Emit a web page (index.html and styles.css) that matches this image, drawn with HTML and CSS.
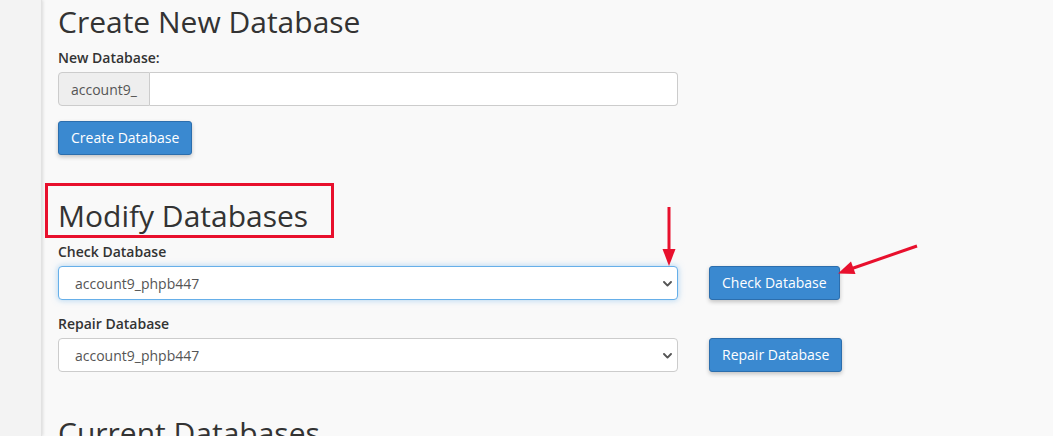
FILE: index.html
```html
<!DOCTYPE html>
<html lang="en">
<head>
<meta charset="utf-8">
<title>MySQL Databases</title>
<link rel="stylesheet" href="styles.css">
</head>
<body>
<div class="layout">
  <aside class="sidebar"></aside>
  <main class="content">
    <section class="section">
      <h1 class="title">Create New Database</h1>
      <label class="label">New Database:</label>
      <div class="input-group">
        <span class="addon">account9_</span>
        <span class="input"></span>
      </div>
      <button class="btn btn-create">Create Database</button>
    </section>

    <section class="section section-modify">
      <h1 class="title">Modify Databases</h1>
      <label class="label">Check Database</label>
      <div class="row">
        <div class="select focused">
          <span class="select-text">account9_phpb447</span>
          <svg class="chevron" width="9" height="6" viewBox="0 0 9 6"><path d="M1 1 L4.5 4.6 L8 1" fill="none" stroke="#555" stroke-width="1.9" stroke-linecap="round" stroke-linejoin="round"/></svg>
        </div>
        <button class="btn">Check Database</button>
      </div>
      <label class="label label-repair">Repair Database</label>
      <div class="row">
        <div class="select">
          <span class="select-text">account9_phpb447</span>
          <svg class="chevron" width="9" height="6" viewBox="0 0 9 6"><path d="M1 1 L4.5 4.6 L8 1" fill="none" stroke="#555" stroke-width="1.9" stroke-linecap="round" stroke-linejoin="round"/></svg>
        </div>
        <button class="btn">Repair Database</button>
      </div>
    </section>

    <section class="section section-current">
      <h1 class="title">Current Databases</h1>
    </section>
  </main>
</div>

<svg class="annotations" width="1053" height="436" viewBox="0 0 1053 436">
  <rect x="46.5" y="184.5" width="286" height="52" fill="none" stroke="#e8102d" stroke-width="3"/>
  <line x1="669" y1="207" x2="669" y2="252" stroke="#e8102d" stroke-width="3"/>
  <polygon points="662.5,249 675.5,249 669,266" fill="#e8102d"/>
  <line x1="917" y1="246" x2="852" y2="268.5" stroke="#e8102d" stroke-width="3"/>
  <polygon points="838,273.5 851,261.5 855.5,274" fill="#e8102d"/>
</svg>
</body>
</html>
```

FILE: styles.css
```css
* { box-sizing: border-box; }

html, body {
  margin: 0;
  padding: 0;
  height: 100%;
}

body {
  font-family: "Open Sans", "Liberation Sans", sans-serif;
  color: #333;
  background: #f9f9f9;
  overflow: hidden;
  position: relative;
}

.layout {
  display: flex;
  height: 436px;
}

.sidebar {
  width: 42px;
  flex: 0 0 42px;
  background: #f3f3f3;
  box-shadow: 1px 0 3px rgba(0, 0, 0, 0.12);
  border-right: 1px solid #e2e2e2;
  position: relative;
  z-index: 1;
}

.content {
  flex: 1;
  padding: 5px 0 0 16px;
}

.section {
  display: flex;
  flex-direction: column;
  align-items: flex-start;
}

.title {
  margin: 0 0 10px 0;
  font-size: 30px;
  line-height: 33px;
  font-weight: 400;
  color: #333;
}

.label {
  font-size: 14px;
  line-height: 20px;
  font-weight: 600;
  color: #333;
  margin-bottom: 4px;
}

.input-group {
  display: flex;
  width: 620px;
  height: 34px;
}

.addon {
  display: flex;
  align-items: center;
  padding: 0 12px;
  font-size: 14px;
  color: #555;
  background: #eee;
  border: 1px solid #ccc;
  border-radius: 4px 0 0 4px;
}

.input {
  flex: 1;
  background: #fff;
  border: 1px solid #ccc;
  border-left: 0;
  border-radius: 0 4px 4px 0;
}

.btn {
  font-family: "Open Sans", "Liberation Sans", sans-serif;
  font-size: 14px;
  line-height: 20px;
  color: #fff;
  background: #3a89d0;
  border: 1px solid #2c6ead;
  border-radius: 3px;
  padding: 6px 12px;
  height: 34px;
  box-shadow: 0 2px 4px rgba(0, 0, 0, 0.22);
  cursor: pointer;
}

.btn-create {
  margin-top: 15px;
}

.section-modify {
  margin-top: 44px;
}

.row {
  display: flex;
  align-items: center;
  gap: 31px;
}

.select {
  width: 620px;
  height: 34px;
  display: flex;
  align-items: center;
  justify-content: space-between;
  padding: 0 5px 0 16px;
  background: #fff;
  border: 1px solid #ccc;
  border-radius: 4px;
  font-size: 14px;
  color: #555;
}

.select.focused {
  border-color: #66afe9;
  box-shadow: 0 0 6px rgba(102, 175, 233, 0.55);
}

.chevron {
  margin-top: 1px;
}

.label-repair {
  margin-top: 14px;
}

.section-current {
  margin-top: 44px;
}

.annotations {
  position: absolute;
  left: 0;
  top: 0;
  pointer-events: none;
  z-index: 5;
}
```
